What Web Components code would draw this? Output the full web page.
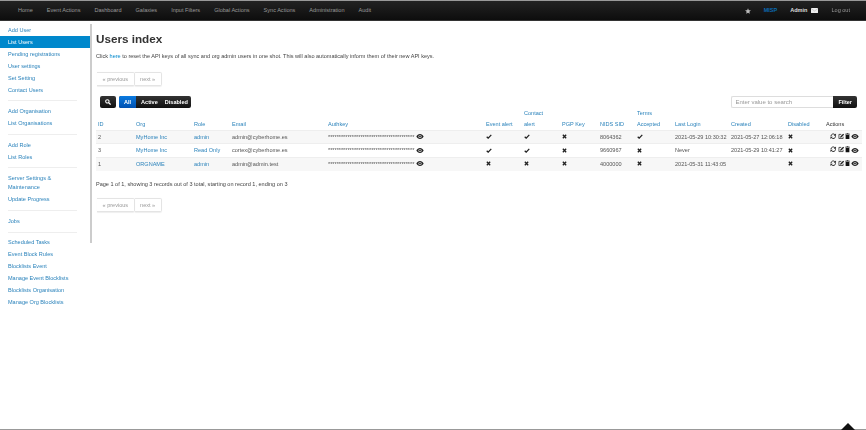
<!DOCTYPE html>
<html lang="en"><head><meta charset="utf-8"><title>Users index</title>
<style>
html,body{margin:0;padding:0;background:#fff;height:430px;overflow:hidden}
body{font:5.550px/9px "Liberation Sans",Arial,sans-serif;color:#444;position:relative}
app-shell{filter:blur(.45px)}
</style></head><body>
<app-shell></app-shell>
<script>
const I={
eye:'<svg width="8" height="5" viewBox="0 0 16 11"><path fill="#222" d="M8 0C4.500 0 1.600 2 0 5.500 1.600 9 4.500 11 8 11s6.400-2 8-5.500C14.400 2 11.500 0 8 0zm0 9A3.500 3.500 0 1 1 8 2a3.500 3.500 0 0 1 0 7zM8 3.500a2 2 0 1 0 0 4 2 2 0 0 0 0-4z"/></svg>',
ok:'<svg width="6" height="5" viewBox="0 0 14 12"><path fill="none" stroke="#222" stroke-width="3" d="M1.500 6.500 5 10 12.500 2"/></svg>',
no:'<svg width="5" height="5" viewBox="0 0 12 12"><path fill="none" stroke="#222" stroke-width="3.200" d="M2 2l8 8M10 2l-8 8"/></svg>',
sync:'<svg width="6.500" height="6.500" viewBox="0 0 14 14"><path fill="none" stroke="#222" stroke-width="2" d="M2 7a5 5 0 0 1 8.500-3.500M12 7a5 5 0 0 1-8.500 3.500"/><path fill="#222" d="M13 1v5H8zM1 13V8h5z"/></svg>',
edit:'<svg width="6.500" height="6.500" viewBox="0 0 14 14"><path fill="none" stroke="#222" stroke-width="1.600" d="M11 8v4H2V3h5"/><path fill="#222" d="M5 7.500 11 1.500l2 2-6 6-2.500.5z"/></svg>',
trash:'<svg width="5" height="6.500" viewBox="0 0 12 14"><path fill="#111" d="M4 0h4v1h3.500v2H.5V1H4zM1.500 4h9v10h-9z"/></svg>',
search:'<svg width="6" height="6" viewBox="0 0 14 14"><circle cx="5.500" cy="5.500" r="4" fill="none" stroke="#fff" stroke-width="2.400"/><path stroke="#fff" stroke-width="3" d="M8.500 8.500 13 13"/></svg>',
star:'<svg width="6" height="6" viewBox="0 0 14 14"><path fill="#bbb" d="M7 .5 9 5l4.800.5-3.600 3.200 1 4.800L7 11l-4.200 2.500 1-4.800L.2 5.500 5 5z"/></svg>',
mail:'<svg width="7" height="5" viewBox="0 0 14 10"><rect width="14" height="10" rx="1" fill="#eee"/><path d="M0 1l7 5 7-5" fill="none" stroke="#999" stroke-width=".8"/></svg>'
};
function def(name,css,html){
 customElements.define(name,class extends HTMLElement{
  constructor(){super();this.attachShadow({mode:'open'});}
  connectedCallback(){this.shadowRoot.innerHTML='<style>'+css+'</style>'+(typeof html==='function'?html(this):html);}
 });
}
def('top-bar',`
:host{display:flex;align-items:center;padding:0 9px 0 11px;background:linear-gradient(#222,#0d0d0d);border-top:1px solid #999;box-sizing:border-box;height:21px;border-bottom:1px solid #333;color:#999}
a{padding:0 7px;white-space:nowrap}
.sp{flex:1}
.m{color:#0a6ab0;font-weight:bold;padding:0;margin:0 13px 0 13px}
.ad{color:#ddd;font-weight:bold;padding:0 4px 0 0}
.st{display:flex}
.ml{display:flex;margin-right:0}
`,()=>['Home','Event Actions','Dashboard','Galaxies','Input Filters','Global Actions','Sync Actions','Administration','Audit'].map(t=>`<a>${t}</a>`).join('')+`<span class="sp"></span><span class="st">${I.star}</span><a class="m">MISP</a><a class="ad">Admin</a><span class="ml">${I.mail}</span><a style="padding-left:13px">Log out</a>`);
def('side-menu',`
:host{display:block;flex:none;width:92px;height:219px;margin-top:3px;box-sizing:border-box;border-right:2px solid #ccc;color:#2a82bb}
div.i{padding:1.500px 2px 1.500px 8px}
.a{background:#0088cc;color:#fff}
hr{border:0;border-top:1px solid #eee;margin:4.300px 13px 4.300px 8px}
`,()=>{const g=[['Add User','List Users','Pending registrations','User settings','Set Setting','Contact Users'],['Add Organisation','List Organisations'],['Add Role','List Roles'],['Server Settings &amp;<br>Maintenance','Update Progress'],['Jobs'],['Scheduled Tasks','Event Block Rules','Blocklists Event','Manage Event Blocklists','Blocklists Organisation','Manage Org Blocklists']];
return g.map(x=>x.map(t=>`<div class="i${t==='List Users'?' a':''}">${t}</div>`).join('')).join('<hr>');});
def('page-pager',`
:host{display:flex;color:#999}
a{display:block;padding:1.500px 5.500px;border:1px solid #e4e4e4;border-left-width:0;height:9px;box-shadow:0 .5px 1px #0001;border-radius:0 2px 2px 0}
a:first-child{border-left-width:1px;border-radius:2px 0 0 2px}
`,`<a>« previous</a><a>next »</a>`);
def('filter-bar',`
:host{display:flex;align-items:stretch;height:12px;padding:0 5px 0 4px;color:#fff;font-weight:bold}
.b{display:flex;align-items:center;background:linear-gradient(#333,#111);border-radius:2px}
.s{width:16px;justify-content:center;margin-right:3px}
.o{padding:0 5px}.o.on{background:linear-gradient(#0a7ae0,#0050b0);border-radius:2px 0 0 2px}
.g{display:flex;background:linear-gradient(#333,#111);border-radius:2px}
.g span{display:flex;align-items:center}
.sp{flex:1}
.in{width:102px;box-sizing:border-box;border:1px solid #ddd;border-right:0;border-radius:2px 0 0 2px;color:#999;font-weight:normal;font-size:6px;padding-left:3px;display:flex;align-items:center;background:#fff}
.f{padding:0 5px;border-radius:0 2px 2px 0}
`,`<span class="b s">${I.search}</span><span class="g"><span class="o on">All</span><span class="o" style="padding-right:2px">Active</span><span class="o" style="padding-right:3px">Disabled</span></span><span class="sp"></span><span class="in">Enter value to search</span><span class="b f">Filter</span>`);
def('users-table',`
:host{display:block}
table{border-collapse:collapse;table-layout:fixed;width:766px;white-space:nowrap}
th{font-weight:normal;color:#2a82bb;text-align:left;vertical-align:bottom;padding:0 2px 1px;line-height:10.500px;white-space:normal;height:20px}
th.k{color:#333}
td{padding:0 2px;height:13.400px;border-top:1px solid #eee;box-sizing:border-box;color:#555}
tr:nth-child(odd) td{background:#f7f7f7}
td a{color:#2a82bb}
svg{vertical-align:-.5px}
.x{padding-left:6px}
.x svg{margin-right:1px}
`,()=>{const w=[38,58,38,96,158,38,38,38,37,38,56,57,38,38];
const H=['ID','Org','Role','Email','Authkey','Event alert','Contact<br>alert','PGP Key','NIDS SID','Terms<br>Accepted','Last Login','Created','Disabled','Actions'];
const R=[['2','MyHome Inc','admin','admin@cyberhome.es',1,1,0,'8064362',1,'2021-05-29 10:30:32','2021-05-27 12:06:18',0],
['3','MyHome Inc','Read Only','cortex@cyberhome.es',1,1,0,'9660967',0,'Never','2021-05-29 10:41:27',0],
['1','ORGNAME','admin','admin@admin.test',0,0,0,'4000000',0,'2021-05-31 11:43:05','',0]];
const m=b=>b?I.ok:I.no;
return `<table><colgroup>${w.map(x=>`<col style="width:${x}px">`).join('')}</colgroup><thead><tr>${H.map((h,i)=>`<th${i==13?' class="k"':''}>${h}</th>`).join('')}</tr></thead><tbody>${R.map(r=>`<tr><td>${r[0]}</td><td><a>${r[1]}</a></td><td><a>${r[2]}</a></td><td>${r[3]}</td><td>${'*'.repeat(40)} ${I.eye}</td><td>${m(r[4])}</td><td>${m(r[5])}</td><td>${m(r[6])}</td><td>${r[7]}</td><td>${m(r[8])}</td><td>${r[9]}</td><td>${r[10]}</td><td>${m(r[11])}</td><td class="x">${I.sync}${I.edit}${I.trash}${I.eye}</td></tr>`).join('')}</tbody></table>`;});
def('users-page',`
:host{display:block;flex:1;min-width:0;padding:0 4px}
h1{font:bold 11.700px/16px "Liberation Sans",Arial,sans-serif;color:#333;margin:10px 0 0}
p{margin:5px 0 0}
page-pager{margin-left:1px}
.p1{margin-top:11px}
filter-bar{margin-top:10px}
.inf{margin:9.500px 0 0}
.p2{margin-top:9px}
a{color:#0088cc}
`,`<h1>Users index</h1><p>Click <a>here</a> to reset the API keys of all sync and org admin users in one shot. This will also automatically inform them of their new API keys.</p><page-pager class="p1"></page-pager><filter-bar></filter-bar><users-table></users-table><p class="inf">Page 1 of 1, showing 3 records out of 3 total, starting on record 1, ending on 3</p><page-pager class="p2"></page-pager>`);
def('bottom-mark',`
:host{display:block;position:absolute;left:0;right:0;bottom:0;height:1px;background:#999}
svg{position:absolute;right:11px;bottom:0}
`,`<svg width="14" height="7" viewBox="0 0 14 7"><path fill="#111" d="M7 0 14 7H0z"/></svg>`);
def('app-shell',`
:host{display:block;height:430px;position:relative}
.w{display:flex}
`,`<top-bar></top-bar><div class="w"><side-menu></side-menu><users-page></users-page></div><bottom-mark></bottom-mark>`);
</script>
</body></html>
